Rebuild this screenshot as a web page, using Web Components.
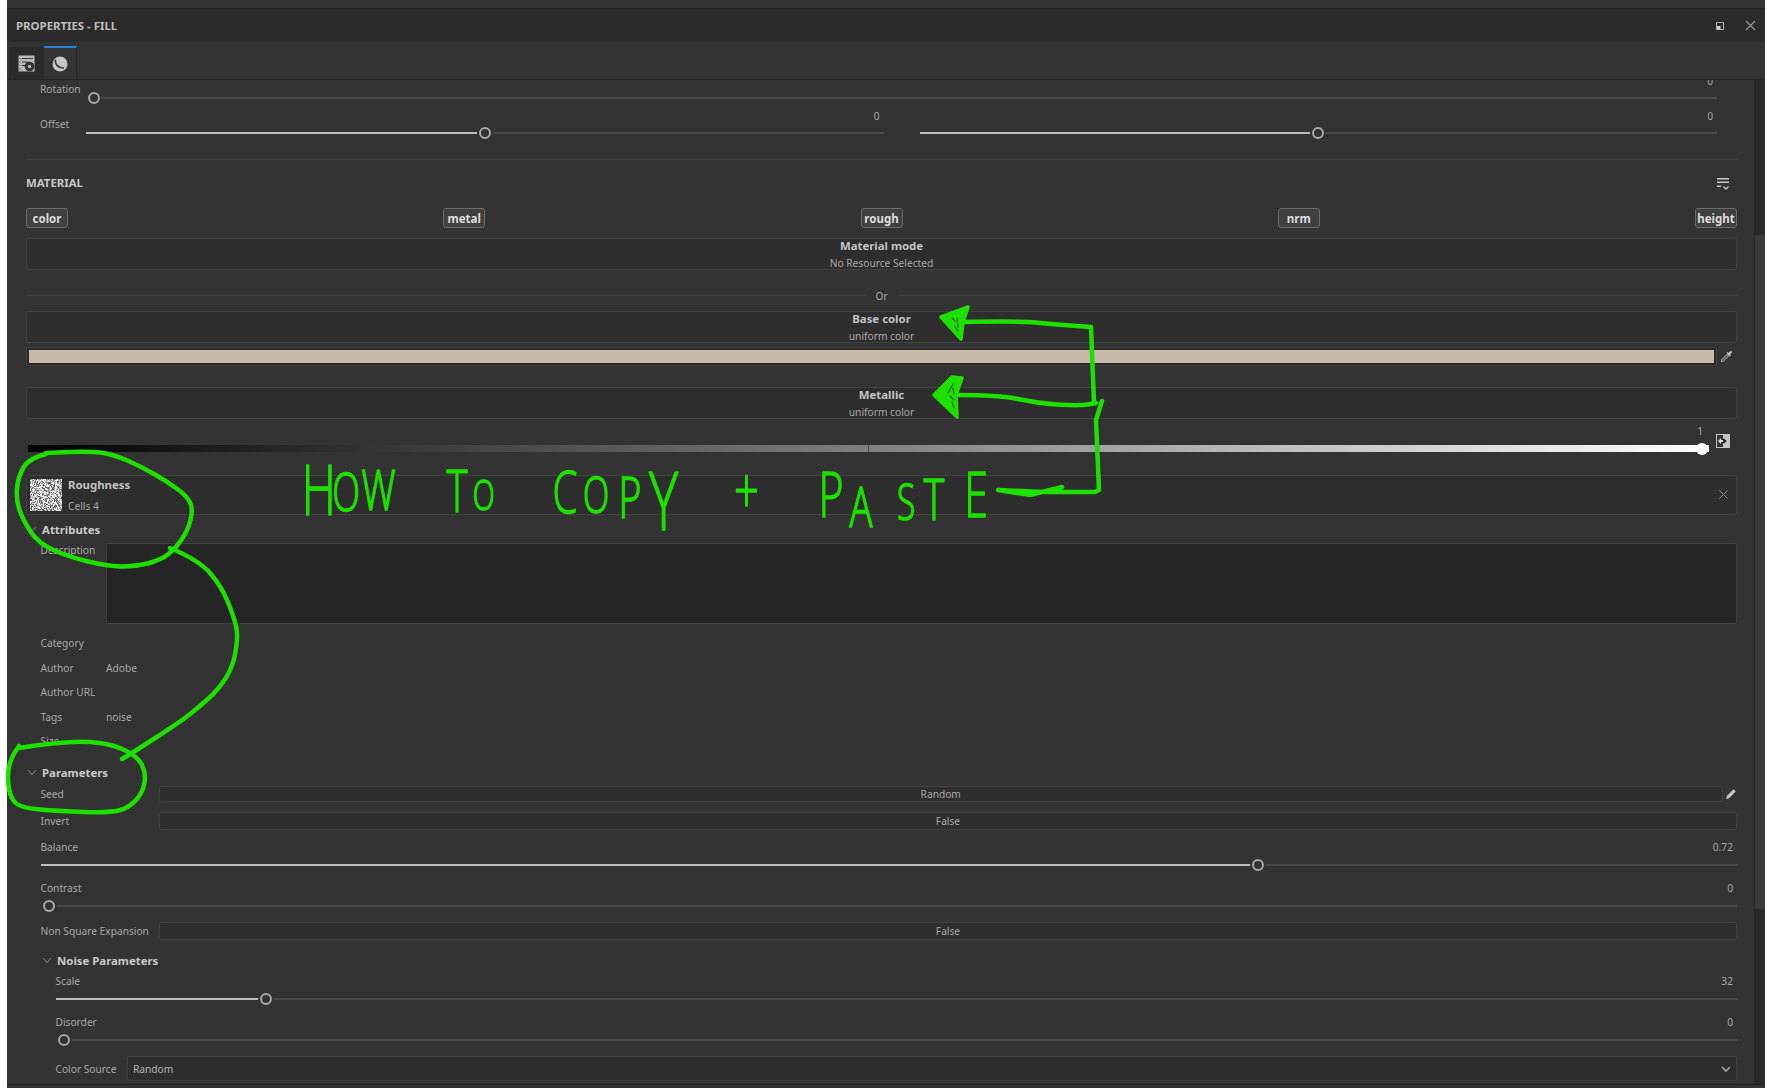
<!DOCTYPE html>
<html>
<head>
<meta charset="utf-8">
<title>Properties - Fill</title>
<style>
html,body{margin:0;height:1088px;overflow:hidden;background:#fff}
</style>
</head>
<body>
<pt-panel>
  <pt-row indent="14" width="46" pad="20" style="margin-top:-7px" label="Rotation" offset="8">
    <pt-slider value="0" pct="0" tight></pt-slider>
  </pt-row>
  <pt-row indent="14" width="46" pad="20" split style="margin-top:2px" label="Offset" offset="8">
    <pt-slider value="0" pct="50" tight></pt-slider>
    <pt-slider value="0" pct="50" tight></pt-slider>
  </pt-row>
  <pt-divider style="margin-top:18px"></pt-divider>
  <pt-head style="margin-top:15px" caps menu>MATERIAL</pt-head>
  <pt-chips style="margin-top:17px">
    <pt-chip>color</pt-chip><pt-chip>metal</pt-chip><pt-chip>rough</pt-chip><pt-chip>nrm</pt-chip><pt-chip>height</pt-chip>
  </pt-chips>
  <pt-box style="margin-top:10px" title="Material mode" sub="No Resource Selected"></pt-box>
  <pt-or style="margin-top:17px">Or</pt-or>
  <pt-box style="margin-top:7px" title="Base color" sub="uniform color"></pt-box>
  <pt-swatch style="margin-top:4px" color="#c8baa9"></pt-swatch>
  <pt-box style="margin-top:21px" title="Metallic" sub="uniform color"></pt-box>
  <pt-gradient style="margin-top:4px" value="1"></pt-gradient>
  <pt-resource style="margin-top:23px" name="Roughness" sub="Cells 4"></pt-resource>
  <pt-head style="margin-top:7px" fold indent="1">Attributes</pt-head>
  <pt-row indent="14.5" width="65.5" style="margin-top:5px" label="Description" offset="-1">
    <pt-field height="81" dark></pt-field>
  </pt-row>
  <pt-attr style="margin-top:7px" label="Category"></pt-attr>
  <pt-attr label="Author">Adobe</pt-attr>
  <pt-attr label="Author URL"></pt-attr>
  <pt-attr label="Tags">noise</pt-attr>
  <pt-attr label="Size"></pt-attr>
  <pt-head style="margin-top:11.5px" fold indent="1">Parameters</pt-head>
  <pt-row indent="14.5" width="118.5" style="margin-top:5px" label="Seed">
    <pt-field height="16" pencil>Random</pt-field>
  </pt-row>
  <pt-row indent="14.5" width="118.5" style="margin-top:10px" label="Invert" offset="1">
    <pt-field height="18">False</pt-field>
  </pt-row>
  <pt-slider style="margin-top:9px;margin-left:14.5px" value="0.72" pct="72" label="Balance"></pt-slider>
  <pt-slider style="margin-top:7px;margin-left:14.5px" value="0" pct="0" label="Contrast"></pt-slider>
  <pt-row indent="14.5" width="118.5" style="margin-top:8px" label="Non Square Expansion" offset="1">
    <pt-field height="18">False</pt-field>
  </pt-row>
  <pt-head style="margin-top:13px" fold indent="16">Noise Parameters</pt-head>
  <pt-slider style="margin-top:4px;margin-left:29.5px" value="32" pct="12.15" label="Scale"></pt-slider>
  <pt-slider style="margin-top:7px;margin-left:29.5px" value="0" pct="0" label="Disorder"></pt-slider>
  <pt-row indent="29.5" width="71.5" style="margin-top:8px" label="Color Source" offset="5">
    <pt-select>Random</pt-select>
  </pt-row>
</pt-panel>
<pt-notes></pt-notes>

<script>
class PtPanel extends HTMLElement{
    constructor(){
        super();
        this.attachShadow({mode:"open"});
        this.shadowRoot.innerHTML = `
        <style>
        :host{display:flex;flex-direction:column;height:1088px;margin-left:7px;background:#333;
              font:10.2px/16px "Noto Sans",sans-serif;color:#a8a8a8;overflow:hidden}
        .top{height:8px;border-bottom:1px solid #222;flex:none}
        .title{flex:none;height:33px;background:#2b2b2b;display:flex;align-items:center;padding:0 9px 0 9px;
               font-weight:700;font-size:11.4px;color:#bdbdbd;gap:21px}
        .title span{flex:1}
        .tabs{flex:none;height:37px;border-bottom:1px solid #252525;display:flex;align-items:flex-end;padding-left:2px}
        .tab{box-sizing:border-box;height:32px;display:flex;align-items:center;justify-content:center;background:#2a2a2a;width:35px}
        .tab.on{height:33px;width:33px;background:#333;border-top:2px solid #2a7fd6;border-right:1px solid #262626}
        .main{flex:1;display:flex;min-height:0}
        .scroll{flex:1;min-width:0;overflow:hidden;padding:0 17px 0 19px}
        .bar{flex:none;width:10px;padding-left:1px;background:#2a2a2a;padding-top:155px}
        .bar i{display:block;height:674px;background:#3a3a3a}
        .foot{flex:none;height:3px;border-top:1px solid #222}
        </style>
        <div class="top"></div>
        <div class="title"><span>PROPERTIES - FILL</span>
          <svg width="8" height="8" viewBox="0 0 8 8"><path d="M.5.5h7v7h-7z" fill="none" stroke="#b5b5b5"/><path d="M1 4h3.500v3.500H1z" fill="#d0d0d0"/></svg>
          <svg width="11" height="11" viewBox="0 0 11 11"><path d="M1 1l9 9M10 1l-9 9" stroke="#999" stroke-width="1.100"/></svg>
        </div>
        <div class="tabs">
          <div class="tab">
            <svg width="17" height="17" viewBox="0 0 17 17"><rect x="0.500" y="0.500" width="16" height="16" fill="#b9b9b9"/>
              <path d="M4 3.500h11M1.500 3.500h1M4 7h6M1.500 7h1M1.500 10.500h1M1.500 14h1M4 10.500h3" stroke="#333" stroke-width="1"/>
              <circle cx="11.500" cy="11.500" r="4.800" fill="#333"/><circle cx="11.500" cy="11.500" r="1.700" fill="#b9b9b9"/></svg>
          </div>
          <div class="tab on">
            <svg width="16" height="16" viewBox="0 0 16 16"><circle cx="8" cy="8" r="7.500" fill="#c6c6c6"/>
              <path d="M3.500 3.500C2.700 8 6 12.500 12 12" fill="none" stroke="#3a3a3a" stroke-width="1.600"/></svg>
          </div>
        </div>
        <div class="main"><div class="scroll"><slot></slot></div><div class="bar"><i></i></div></div>
        <div class="foot"></div>`;
    }
}

class PtRow extends HTMLElement{
    connectedCallback(){
        let indent = this.getAttribute("indent") || 0;
        let width = this.getAttribute("width") || 60;
        let pad = this.getAttribute("pad") || 0;
        let offset = this.getAttribute("offset") || 0;
        this.attachShadow({mode:"open"});
        this.shadowRoot.innerHTML = `
        <style>
        :host{display:flex;padding-left:${indent}px;padding-right:${pad}px}
        .label{flex:none;width:${width}px;position:relative;top:${offset}px;white-space:nowrap;line-height:16px}
        .body{flex:1;min-width:0;display:flex;gap:36px}
        ::slotted(*){flex:1;min-width:0}
        </style>
        <div class="label">${this.getAttribute("label")}</div>
        <div class="body"><slot></slot></div>`;
    }
}

class PtSlider extends HTMLElement{
    connectedCallback(){
        let pct = parseFloat(this.getAttribute("pct") || 0);
        let label = this.getAttribute("label") || "";
        let gap = this.hasAttribute("tight") ? 1 : 2;
        this.attachShadow({mode:"open"});
        this.shadowRoot.innerHTML = `
        <style>
        :host{display:block}
        .head{display:flex;justify-content:space-between;height:16px;padding-right:4px}
        .track{display:flex;align-items:center;height:16px;margin-top:${gap}px}
        .fill,.rest{height:2px;flex-basis:0}
        .fill{background:#bdbdbd;flex-grow:${pct}}
        .rest{background:#4a4a4a;flex-grow:${100-pct}}
        .thumb{flex:none;width:16px;height:16px;display:flex;align-items:center;justify-content:center}
        .thumb i{box-sizing:border-box;width:12px;height:12px;border:2px solid #a9a9a9;border-radius:50%}
        </style>
        <div class="head"><span>${label}</span><span>${this.getAttribute("value")}</span></div>
        <div class="track"><div class="fill"></div><div class="thumb"><i></i></div><div class="rest"></div></div>`;
    }
}

class PtDivider extends HTMLElement{
    constructor(){
        super();
        this.attachShadow({mode:"open"});
        this.shadowRoot.innerHTML = `<style>:host{display:block;height:1px;background:#3f3f3f}</style>`;
    }
}

class PtHead extends HTMLElement{
    connectedCallback(){
        let fold = this.hasAttribute("fold");
        let indent = this.getAttribute("indent") || 0;
        let menu = this.hasAttribute("menu");
        this.attachShadow({mode:"open"});
        this.shadowRoot.innerHTML = `
        <style>
        :host{display:flex;align-items:center;height:16px;padding-left:${indent}px;font-weight:700;font-size:11.4px;color:#c9c9c9}
        .fold{flex:none;margin-right:5px;margin-top:-2px}
        span{flex:1}
        svg{flex:none}
        .menu{margin-right:8px}
        </style>
        ${fold ? `<svg class="fold" width="10" height="7" viewBox="0 0 10 7"><path d="M1 1l4 4.500L9 1" fill="none" stroke="#7d7d7d" stroke-width="1.100"/></svg>` : ""}
        <span><slot></slot></span>
        ${menu ? `<svg class="menu" width="12" height="13" viewBox="0 0 12 13"><path d="M0 1h12v1.500H0zM0 4.500h12V6H0zM0 8.500h4V10H0z" fill="#c8c8c8"/><path d="M6.500 9.500l2.500 2.500 2.500-2.500" fill="none" stroke="#c8c8c8" stroke-width="1.300"/></svg>` : ""}`;
    }
}

class PtChips extends HTMLElement{
    constructor(){
        super();
        this.attachShadow({mode:"open"});
        this.shadowRoot.innerHTML = `<style>:host{display:flex;justify-content:space-between}</style><slot></slot>`;
    }
}

class PtChip extends HTMLElement{
    constructor(){
        super();
        this.attachShadow({mode:"open"});
        this.shadowRoot.innerHTML = `
        <style>
        :host{display:flex;align-items:center;justify-content:center;box-sizing:border-box;width:42px;height:20px;padding-top:1px;
              background:#404040;border:1px solid #6a6a6a;border-radius:3px;font-weight:700;color:#dcdcdc;font-size:11.5px}
        </style><slot></slot>`;
    }
}

class PtBox extends HTMLElement{
    connectedCallback(){
        this.attachShadow({mode:"open"});
        this.shadowRoot.innerHTML = `
        <style>
        :host{display:block;box-sizing:border-box;height:32px;background:#2e2e2e;border:1px solid #414141;border-radius:2px;text-align:center}
        b{display:block;color:#c2c2c2;line-height:15px;font-weight:700;font-size:11.4px;margin-top:-1px}
        div{line-height:19px;color:#a8a8a8;margin-top:1px}
        </style>
        <b>${this.getAttribute("title")}</b><div>${this.getAttribute("sub")}</div>`;
    }
}

class PtOr extends HTMLElement{
    constructor(){
        super();
        this.attachShadow({mode:"open"});
        this.shadowRoot.innerHTML = `
        <style>
        :host{display:flex;align-items:center;height:17px;gap:10px}
        i{flex:1;height:1px;background:#3f3f3f}
        </style><i></i><slot></slot><i></i>`;
    }
}

class PtSwatch extends HTMLElement{
    connectedCallback(){
        this.attachShadow({mode:"open"});
        this.shadowRoot.innerHTML = `
        <style>
        :host{display:flex;align-items:center;height:19px}
        .well{flex:1;box-sizing:border-box;height:19px;padding:2px;background:#2a2a2a;border:1px solid #414141;border-radius:2px}
        .well i{display:block;height:100%;background:${this.getAttribute("color")}}
        .pick{flex:none;width:20.5px;display:flex;justify-content:center}
        </style>
        <div class="well"><i></i></div>
        <div class="pick"><svg width="13" height="13" viewBox="0 0 13 13">
          <path d="M1.500 11.500v-1.500L7 4.500l1.500 1.500L3 11.500z" fill="none" stroke="#9a9a9a" stroke-width="1.100"/>
          <path d="M6.500 3l1-1 1 1 1.800-1.800c1-.6 2.100.5 1.500 1.500L10 4.500l1 1-1 1z" fill="#c4c4c4"/></svg></div>`;
    }
}

class PtGradient extends HTMLElement{
    connectedCallback(){
        this.attachShadow({mode:"open"});
        this.shadowRoot.innerHTML = `
        <style>
        :host{display:flex;align-items:flex-start;padding-left:1.5px}
        .col{flex:1;min-width:0}
        .val{height:16px;text-align:right;padding-right:6px}
        .bar{position:relative;height:7px;margin-top:6px;background:linear-gradient(90deg,#000,#fff)}
        .bar b{position:absolute;left:50%;top:0;width:1px;height:7px;background:#555}
        .bar i{position:absolute;right:1px;top:-2.5px;width:12px;height:12px;border-radius:50%;background:#fff}
        .ico{flex:none;width:28px;display:flex;justify-content:flex-end;padding:11px 7px 0 0;box-sizing:border-box}
        </style>
        <div class="col"><div class="val">${this.getAttribute("value")}</div><div class="bar"><b></b><i></i></div></div>
        <div class="ico"><svg width="14" height="14" viewBox="0 0 14 14"><rect width="14" height="14" fill="#c4c4c4"/>
          <path d="M1 1h6v12H1z" fill="#333"/><path d="M2 7l3-3v2h4V4l3 3-3 3V8H5v2z" fill="#ddd"/><path d="M7 4.500h1l3 2.500-3 2.500H7z" fill="#222"/></svg></div>`;
    }
}

class PtResource extends HTMLElement{
    connectedCallback(){
        // pixel noise for the Cells thumbnail, seeded so that it never changes
        let s = 1234, cells = "";
        const rnd = () => (s = (s * 16807) % 2147483647) / 2147483647;
        for(let y = 0; y < 32; y++){
            for(let x = 0; x < 32; x++){
                let r = rnd();
                let v = r < .3 ? 70 + r * 220 : (r < .55 ? 170 : 235);
                cells += `<rect x="${x}" y="${y}" width="1" height="1" fill="rgb(${v|0},${v|0},${v|0})"/>`;
            }
        }
        this.attachShadow({mode:"open"});
        this.shadowRoot.innerHTML = `
        <style>
        :host{display:flex;box-sizing:border-box;height:40px;background:#2e2e2e;border:1px solid #414141;border-radius:2px;padding:3px 8px 0 3px}
        svg.n{flex:none;display:block;filter:blur(.45px)}
        .t{flex:1;margin-left:6px}
        b{display:block;color:#c2c2c2;font-weight:700;font-size:11.4px;margin-top:-2px;line-height:16px}
        div.c{margin-top:5px}
        .x{flex:none;margin-top:11px}
        </style>
        <svg class="n" width="32" height="32" viewBox="0 0 32 32" shape-rendering="crispEdges">${cells}</svg>
        <div class="t"><b>${this.getAttribute("name")}</b><div class="c">${this.getAttribute("sub")}</div></div>
        <svg class="x" width="9" height="9" viewBox="0 0 9 9"><path d="M.5.5l8 8M8.500.5l-8 8" stroke="#8c8c8c" stroke-width="1"/></svg>`;
    }
}

class PtField extends HTMLElement{
    connectedCallback(){
        let dark = this.hasAttribute("dark");
        let pencil = this.hasAttribute("pencil");
        this.attachShadow({mode:"open"});
        this.shadowRoot.innerHTML = `
        <style>
        :host{display:flex;align-items:center}
        .f{flex:1;box-sizing:border-box;height:${this.getAttribute("height")}px;background:${dark ? "#252525" : "#2e2e2e"};
           border:1px solid #414141;border-radius:2px;display:flex;align-items:center;justify-content:center;line-height:1}
        .p{flex:none;width:14.5px;display:flex;justify-content:flex-end}
        </style>
        <div class="f"><slot></slot></div>
        ${pencil ? `<div class="p"><svg width="12" height="12" viewBox="0 0 12 12"><path d="M1 11l.8-3L8.500 1.300l2.200 2.200L4 10.200z" fill="#c8c8c8"/></svg></div>` : ""}`;
    }
}

class PtAttr extends HTMLElement{
    connectedCallback(){
        this.attachShadow({mode:"open"});
        this.shadowRoot.innerHTML = `
        <style>
        :host{display:flex;height:24.5px;line-height:24.5px;padding-left:14.5px}
        span{flex:none;width:65.5px}
        </style>
        <span>${this.getAttribute("label")}</span><slot></slot>`;
    }
}

class PtSelect extends HTMLElement{
    constructor(){
        super();
        this.attachShadow({mode:"open"});
        this.shadowRoot.innerHTML = `
        <style>
        :host{display:flex;align-items:center;justify-content:space-between;box-sizing:border-box;height:25px;background:#2e2e2e;
              border:1px solid #414141;border-radius:2px;padding:1px 5px 0;color:#b4b4b4}
        </style>
        <slot></slot>
        <svg width="10" height="7" viewBox="0 0 10 7"><path d="M1 1l4 4 4-4" fill="none" stroke="#a0a0a0" stroke-width="1.600"/></svg>`;
    }
}

// green marker strokes drawn on top of the screenshot
class PtNotes extends HTMLElement{
    connectedCallback(){
        const smooth = (p) => {
            let d = `M${p[0][0]} ${p[0][1]}`;
            for(let i = 1; i < p.length - 1; i++){
                d += `Q${p[i][0]} ${p[i][1]} ${(p[i][0]+p[i+1][0])/2} ${(p[i][1]+p[i+1][1])/2}`;
            }
            let e = p[p.length-1];
            return d + `L${e[0]} ${e[1]}`;
        };
        const curves = [
            [[46,454],[29,458],[18,477],[16,500],[23,520],[38,543],[69,557],[107,566],[134,567],[161,560],[176,548],[188,530],[193,510],[188,497],[168,482],[142,467],[115,455],[92,451],[46,453]],
            [[170,548],[199,560],[222,587],[235,620],[238,637],[233,667],[218,690],[199,707],[180,722],[132,753],[122,759]],
            [[19,746],[11,757],[7,777],[11,800],[23,808],[57,811],[111,813],[130,807],[143,792],[146,773],[138,757],[115,745],[84,741],[46,744],[19,748]],
            [[964,322],[1021,321],[1050,324],[1091,327]],
            [[954,395],[1000,395],[1036,403],[1079,406],[1096,403]]
        ];
        const lines = [
            "M1091 327L1094 403",
            "M1102 401L1096 420L1099 490L1095 492L1043 492L998 490L1030 495L1062 487"
        ];
        // arrow heads are scribbled: a filled shape with a few dark flecks left in it
        const heads = [
            "M968 307L941 317L961 339L963 322Z",
            "M962 378L952 377L934 395L957 417L956 395Z"
        ];
        const flecks = "M952 318L955 321M957 318L958 327M955 326L958 331M948 393L953 384M950 396L954 400M953 388L954 394M952 402L954 408";
        // [letter, centre, baseline, cap height]
        const hand = [
            ["H",319,515,50],["O",346,511,38],["W",380,510,40],[" ",0,0,40],
            ["T",457,512,42],["O",485,510,30],[" ",0,0,40],
            ["C",565,513,42],["O",596,513,36],["P",630,518,41],["Y",665,530,58],[" ",0,0,40],
            ["+",748,513,46],[" ",0,0,40],
            ["P",831,517,45],["A",861,527,40],["S",906,520,35],["T",934,520,41],["E",976,517,45]
        ];
        const sx = 0.68;
        let tspans = hand.map(l => l[0] === " " ? " " :
            `<tspan x="${(l[1]/sx).toFixed(1)}" y="${l[2]}" font-size="${(l[3]/.714).toFixed(1)}">${l[0]}</tspan>`).join("");
        this.attachShadow({mode:"open"});
        this.shadowRoot.innerHTML = `
        <style>
        :host{position:absolute;left:0;top:0;width:1765px;height:1088px;pointer-events:none}
        svg{display:block}
        text{font-family:"Open Sans",sans-serif;font-weight:300;text-anchor:middle;fill:#1de000;stroke:#1de000;stroke-width:1.6px}
        </style>
        <svg width="1765" height="1088" viewBox="0 0 1765 1088" fill="none" stroke="#1de000" stroke-width="4.5" stroke-linecap="round" stroke-linejoin="round">
          ${curves.map(c => `<path d="${smooth(c)}"/>`).join("")}
          ${lines.map(d => `<path d="${d}"/>`).join("")}
          ${heads.map(d => `<path d="${d}" fill="#1de000" stroke-width="3.6"/>`).join("")}
          <path d="${flecks}" stroke="#2f5a20" stroke-width="1.1"/>
          <text transform="scale(${sx} 1)">${tspans}</text>
        </svg>`;
    }
}

window.customElements.define("pt-panel", PtPanel);
window.customElements.define("pt-row", PtRow);
window.customElements.define("pt-slider", PtSlider);
window.customElements.define("pt-divider", PtDivider);
window.customElements.define("pt-head", PtHead);
window.customElements.define("pt-chips", PtChips);
window.customElements.define("pt-chip", PtChip);
window.customElements.define("pt-box", PtBox);
window.customElements.define("pt-or", PtOr);
window.customElements.define("pt-swatch", PtSwatch);
window.customElements.define("pt-gradient", PtGradient);
window.customElements.define("pt-resource", PtResource);
window.customElements.define("pt-field", PtField);
window.customElements.define("pt-attr", PtAttr);
window.customElements.define("pt-select", PtSelect);
window.customElements.define("pt-notes", PtNotes);
</script>
</body>
</html>
